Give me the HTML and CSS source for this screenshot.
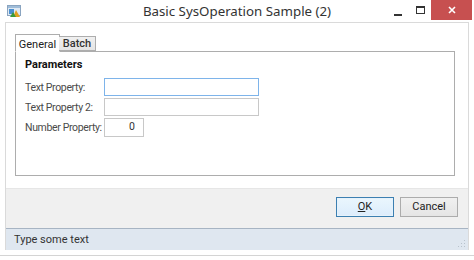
FILE: index.html
```html
<!DOCTYPE html>
<html>
<head>
<meta charset="utf-8">
<link rel="stylesheet" href="styles.css">
</head>
<body>
<div class="window">
  <div class="titlebar">
    <div class="app-icon">
      <svg width="14" height="13" viewBox="0 0 14 13">
        <rect x="0.5" y="0.5" width="13" height="10" fill="#dfe9f3" stroke="#8aa4c0"/>
        <rect x="1" y="1" width="12" height="2" fill="#9fbcd8"/>
        <rect x="2" y="4" width="5" height="5" fill="#4a8fd0"/>
        <path d="M6 12 L9 5 L13 12 Z" fill="#e0a020"/>
        <path d="M3 12 L6 7 L9 12 Z" fill="#3a9a3a"/>
      </svg>
    </div>
    <div class="title">Basic SysOperation Sample (2)</div>
    <div class="controls">
      <span class="ctl min"><svg width="8" height="8" viewBox="0 0 8 8"><rect x="0" y="5" width="8" height="2" fill="#333"/></svg></span>
      <span class="ctl max"><svg width="9" height="8" viewBox="0 0 9 8"><rect x="0.5" y="0.5" width="8" height="7" fill="none" stroke="#333"/><rect x="0" y="0" width="9" height="2" fill="#333"/></svg></span>
      <span class="ctl close"><svg width="8" height="8" viewBox="0 0 8 8"><path d="M1 1 L7 7 M7 1 L1 7" stroke="#fff" stroke-width="1.6"/></svg></span>
    </div>
  </div>
  <div class="client">
    <div class="main">
      <div class="tabs">
        <div class="tab active">General</div>
        <div class="tab">Batch</div>
      </div>
      <div class="panel">
        <div class="group-title">Parameters</div>
        <div class="row"><label>Text Property:</label><div class="input focus"></div></div>
        <div class="row"><label>Text Property 2:</label><div class="input"></div></div>
        <div class="row"><label>Number Property:</label><div class="input num">0</div></div>
      </div>
    </div>
    <div class="buttons">
      <div class="btn default"><u>O</u>K</div>
      <div class="btn">Cancel</div>
    </div>
    <div class="status">
      <span>Type some text</span>
      <svg class="grip" width="8" height="8" viewBox="0 0 8 8">
        <rect x="6" y="0" width="1" height="1" fill="#b8c2cc"/>
        <rect x="3" y="3" width="1" height="1" fill="#b8c2cc"/>
        <rect x="6" y="3" width="1" height="1" fill="#b8c2cc"/>
        <rect x="0" y="6" width="1" height="1" fill="#b8c2cc"/>
        <rect x="3" y="6" width="1" height="1" fill="#b8c2cc"/>
        <rect x="6" y="6" width="1" height="1" fill="#b8c2cc"/>
      </svg>
    </div>
  </div>
</div>
</body>
</html>
```

FILE: styles.css
```css
* { box-sizing: border-box; }
html, body {
  margin: 0;
  padding: 0;
  background: #ffffff;
}
body {
  width: 474px;
  height: 260px;
  overflow: hidden;
  font-family: Roboto, "Noto Sans", sans-serif;
  color: #333;
}
.window {
  width: 474px;
  height: 256px;
  border-bottom: 1px solid #d4d4d4;
  display: flex;
  flex-direction: column;
}
.titlebar {
  height: 22px;
  display: flex;
  align-items: center;
  position: relative;
}
.app-icon {
  width: 14px;
  height: 13px;
  margin-left: 7px;
  display: flex;
}
.title {
  position: absolute;
  left: 0;
  right: 0;
  top: 2px;
  text-align: center;
  font-family: "Noto Sans", sans-serif;
  font-size: 13.3px;
  color: #333;
  line-height: 18px;
  pointer-events: none;
}
.controls {
  margin-left: auto;
  display: flex;
  align-self: flex-start;
  height: 20px;
}
.ctl {
  display: flex;
  align-items: center;
  justify-content: center;
}
.ctl.min { width: 25px; margin-top: 4px; align-items: flex-start; padding-top: 5px; }
.ctl.max { width: 20px; align-items: flex-start; padding-top: 6px; }
.ctl.close {
  width: 41px;
  margin-left: 1px;
  margin-right: 2px;
  background: #c75050;
}
.client {
  margin: 0 5px;
  border: 1px solid #dadada;
  border-bottom: none;
  display: flex;
  flex-direction: column;
  height: 228px;
}
.main {
  background: #fff;
  height: 166px;
  padding: 11px 13px 0 9px;
  border-bottom: 1px solid #e6e6e6;
}
.tabs {
  display: flex;
  align-items: flex-end;
  height: 18px;
  position: relative;
  z-index: 1;
}
.tab {
  font-size: 11px;
  line-height: 13px;
  color: #222;
  border: 1px solid #adadad;
  white-space: nowrap;
  text-align: center;
}
.tab.active {
  height: 18px;
  padding-top: 3px;
  background: #fff;
  border-bottom-color: #fff;
  width: 45px;
}
.tab:not(.active) {
  height: 15px;
  width: 37px;
  padding-top: 0;
  margin-left: -1px;
  border-left: none;
  margin-bottom: 1px;
  font-weight: 500;
  color: #333;
  background: linear-gradient(#f0f0f0, #e5e5e5);
}
.panel {
  margin-top: -1px;
  border: 1px solid #adadad;
  height: 125px;
  padding: 6px 9px;
}
.group-title {
  font-size: 11px;
  font-weight: bold;
  color: #111;
  line-height: 14px;
  margin-bottom: 5px;
}
.row {
  display: flex;
  align-items: center;
  height: 20px;
}
.row label {
  width: 79px;
  font-size: 10.5px;
  letter-spacing: -0.35px;
  color: #4a4a4a;
  white-space: nowrap;
}
.input {
  width: 155px;
  height: 18px;
  border: 1px solid #c8c8c8;
  background: #fff;
  font-size: 11px;
  line-height: 16px;
}
.input.focus { border-color: #7eb4ea; }
.input.num {
  width: 40px;
  text-align: right;
  padding-right: 8px;
  height: 19px;
  font-size: 10.5px;
  color: #333;
}
.buttons {
  background: #f0f0f0;
  height: 39px;
  display: flex;
  justify-content: flex-end;
  align-items: flex-start;
  padding: 8px 10px 0 0;
  gap: 6px;
}
.btn {
  width: 58px;
  height: 20px;
  border: 1px solid #acacac;
  background: linear-gradient(#f0f0f0, #e5e5e5);
  font-size: 11px;
  line-height: 18px;
  text-align: center;
  color: #222;
}
.btn.default { border-color: #3c7fb1; background: linear-gradient(#eaf6fd, #dcecfc); box-shadow: inset 0 0 0 1px #e6f2fb; }
.btn u { text-decoration: underline; }
.status {
  flex: 1;
  background: #dfe7f0;
  border-top: 1px solid #a7b4c3;
  display: flex;
  align-items: center;
  padding-left: 8px;
  font-size: 11px;
  color: #333;
  position: relative;
}
.grip {
  position: absolute;
  right: 2px;
  bottom: 2px;
}
```
